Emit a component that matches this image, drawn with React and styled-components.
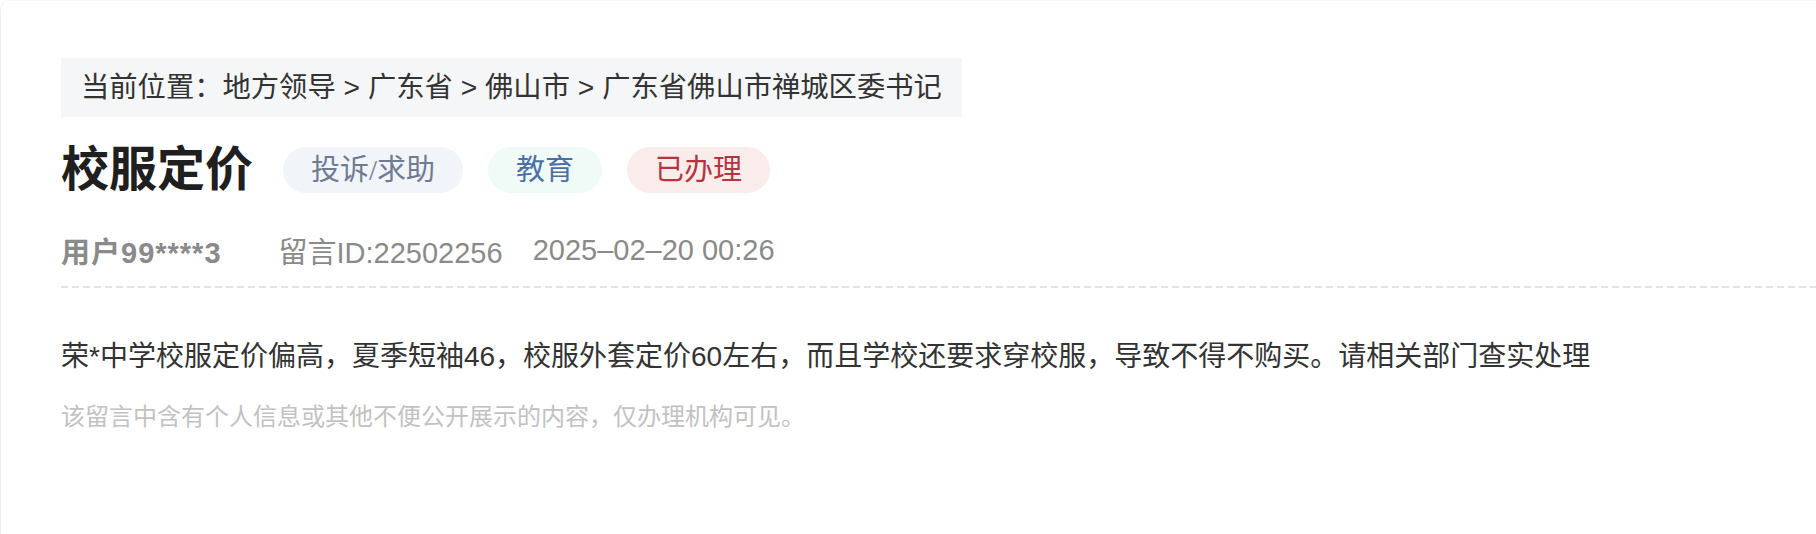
import React from 'react'
import styled, { createGlobalStyle } from 'styled-components'

const GlobalStyle = createGlobalStyle`
  * { box-sizing: border-box; }
  body {
    margin: 0;
    background: #ffffff;
    font-family: "Liberation Sans", "Noto Sans CJK SC", sans-serif;
  }
`

const post = {
  crumbs: ['地方领导', '广东省', '佛山市', '广东省佛山市禅城区委书记'],
  title: '校服定价',
  tags: [
    { label: '投诉/求助', kind: 'type' },
    { label: '教育', kind: 'field' },
    { label: '已办理', kind: 'status' },
  ],
  user: '用户99****3',
  id: '22502256',
  date: '2025–02–20 00:26',
  body: '荣*中学校服定价偏高，夏季短袖46，校服外套定价60左右，而且学校还要求穿校服，导致不得不购买。请相关部门查实处理',
  notice: '该留言中含有个人信息或其他不便公开展示的内容，仅办理机构可见。',
}

const tagColors = {
  type: { bg: '#f1f4f8', fg: '#6f7b93' },
  field: { bg: '#f0faf7', fg: '#4d6fa6' },
  status: { bg: '#fbecec', fg: '#b5343f' },
}

const App = () => {
  return (
    <>
      <GlobalStyle />
      <Card>
        <Breadcrumb>
          当前位置：{post.crumbs.join(' > ')}
        </Breadcrumb>
        <TitleRow>
          <Title>{post.title}</Title>
          {post.tags.map((tag) => (
            <Tag key={tag.label} $kind={tag.kind}>{tag.label}</Tag>
          ))}
        </TitleRow>
        <MetaRow>
          <User>{post.user}</User>
          <MetaItem $wide>留言ID:{post.id}</MetaItem>
          <MetaItem>{post.date}</MetaItem>
        </MetaRow>
        <Divider />
        <Content>{post.body}</Content>
        <Notice>{post.notice}</Notice>
      </Card>
    </>
  )
}

const Card = styled.div`
    min-height: 534px;
    padding: 57px 0 0 60px;
    border-left: 1px solid #f0f0f0;
    border-top: 1px solid #f7f7f7;
    border-top-left-radius: 10px;
    background: #fff;
`

const Breadcrumb = styled.div`
    display: inline-block;
    height: 59px;
    line-height: 59px;
    padding: 0 20px;
    background: #f5f6f8;
    color: #333;
    font-size: 28.3px;
    white-space: nowrap;
`

const TitleRow = styled.div`
    display: flex;
    align-items: center;
    gap: 25px;
    margin-top: 30px;
    height: 46px;
`

const Title = styled.h1`
    margin: 0 5px 0 0;
    font-size: 48px;
    line-height: 48px;
    font-weight: 700;
    color: #1f1f1f;
`

const Tag = styled.span`
    height: 46px;
    line-height: 46px;
    padding: 0 28px;
    border-radius: 23px;
    font-family: "Liberation Serif", "Noto Sans CJK SC", serif;
    font-size: 29px;
    background: ${({ $kind }) => tagColors[$kind].bg};
    color: ${({ $kind }) => tagColors[$kind].fg};
`

const MetaRow = styled.div`
    display: flex;
    align-items: center;
    margin-top: 37px;
    height: 40px;
    font-size: 29px;
    color: #8a8a8a;
`

const User = styled.span`
    font-weight: 700;
    letter-spacing: 1px;
    color: #8a8a8a;
`

const MetaItem = styled.span`
    margin-left: ${({ $wide }) => ($wide ? '57px' : '30px')};
`

const Divider = styled.div`
    margin-top: 16px;
    height: 2px;
    background: repeating-linear-gradient(90deg, #e3e3e3 0 7px, transparent 7px 11px);
`

const Content = styled.p`
    margin: 49px 0 0;
    font-size: 28px;
    line-height: 40px;
    color: #333;
`

const Notice = styled.p`
    margin: 23px 0 0;
    font-size: 24px;
    line-height: 34px;
    color: #c2c2c2;
`

export default App
